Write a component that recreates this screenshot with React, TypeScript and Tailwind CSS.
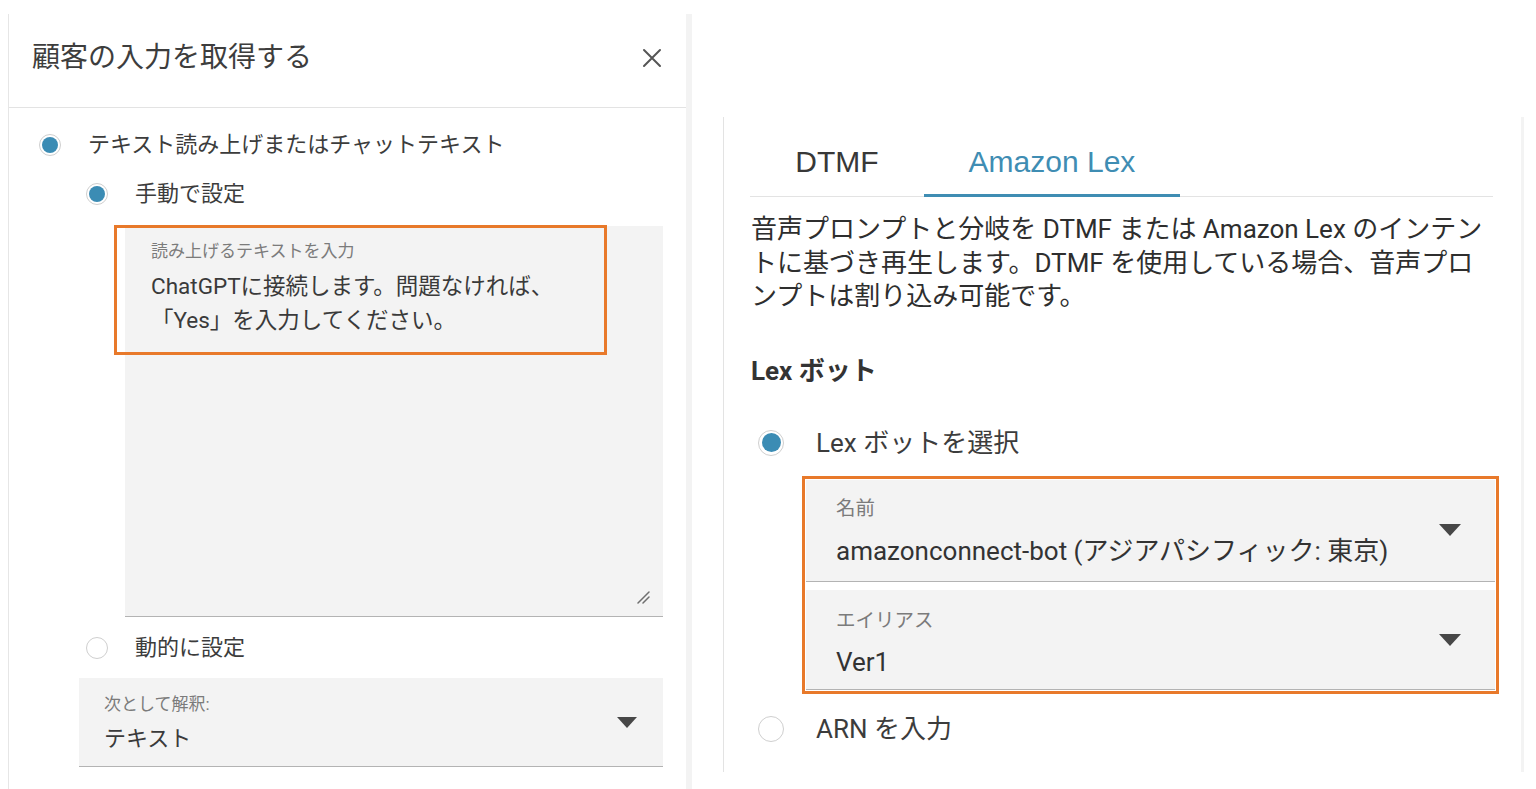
import React from "react"

// Two panels from a contact flow editor: "get customer input" block settings

function Radio({ checked, big }: { checked?: boolean; big?: boolean }) {
  return (
    <span
      className={
        big
          ? "flex h-[26px] w-[26px] shrink-0 items-center justify-center rounded-full border border-[#cfcfcf] bg-white"
          : "flex h-[22px] w-[22px] shrink-0 items-center justify-center rounded-full border border-[#cfcfcf] bg-white"
      }
    >
      {checked && <span className={big ? "h-[19px] w-[19px] rounded-full bg-[#3b8cb4]" : "h-[16px] w-[16px] rounded-full bg-[#3b8cb4]"} />}
    </span>
  )
}

function Caret({ w = 22, h = 12 }: { w?: number; h?: number }) {
  return (
    <svg width={w} height={h} viewBox={`0 0 ${w} ${h}`}>
      <path d={`M0 0H${w}L${w / 2} ${h}Z`} fill="#474747" />
    </svg>
  )
}

function CloseIcon() {
  return (
    <svg width="20" height="20" viewBox="0 0 20 20" className="shrink-0">
      <path d="M2 2L18 18M18 2L2 18" stroke="#555" strokeWidth="2" strokeLinecap="round" />
    </svg>
  )
}

function ResizeHandle() {
  return (
    <svg width="13" height="13" viewBox="0 0 13 13" className="absolute bottom-[12px] right-[13px]">
      <path d="M12 1L1 12M12 6L6 12" stroke="#6f6f6f" strokeWidth="1.5" strokeLinecap="round" />
    </svg>
  )
}

export default function App() {
  return (
    <div className="flex h-[789px] w-[1536px] items-start overflow-hidden bg-white font-['Roboto','Noto_Sans_CJK_JP',sans-serif] text-[#3c3c3c]">
      {/* left panel */}
      <div className="ml-[8px] mt-[14px] flex h-[775px] w-[684px]">
        <section className="flex w-[678px] flex-col border-l border-[#e6e6e6]">
          <header className="flex h-[94px] shrink-0 items-center justify-between border-b border-[#e3e3e3] pb-[5px] pl-[23px] pr-[24px]">
            <h1 className="text-[28px] leading-[36px] text-[#3d3d3d]">顧客の入力を取得する</h1>
            <CloseIcon />
          </header>

          <div className="flex flex-col pt-[22px]">
            <label className="flex h-[30px] items-center gap-[27px] pl-[30px] text-[22px] leading-[30px]">
              <Radio checked />
              <span>テキスト読み上げまたはチャットテキスト</span>
            </label>

            <label className="mt-[19px] flex h-[30px] items-center gap-[27px] pl-[77px] text-[22px] leading-[30px]">
              <Radio checked />
              <span>手動で設定</span>
            </label>

            <div className="relative ml-[116px] mt-[17px] h-[391px] w-[538px] border-b border-[#b3b3b3] bg-[#f3f3f3] pl-[26px] pt-[15px]">
              <div className="pointer-events-none absolute left-[-11px] top-[-1px] h-[130px] w-[493px] border-[3px] border-[#e8792a]" />
              <div className="text-[17px] leading-[20px] text-[#7b7b7b]">読み上げるテキストを入力</div>
              <div className="mt-[8px] text-[22.5px] leading-[34px] text-[#3a3a3a]">
                ChatGPTに接続します。問題なければ、
                <br />
                「Yes」を入力してください。
              </div>
              <ResizeHandle />
            </div>

            <label className="mt-[16px] flex h-[30px] items-center gap-[27px] pl-[77px] text-[22px] leading-[30px]">
              <Radio />
              <span>動的に設定</span>
            </label>

            <div className="relative ml-[70px] mt-[15px] h-[89px] w-[584px] border-b border-[#b3b3b3] bg-[#f3f3f3] pl-[25px] pt-[16px]">
              <div className="text-[17px] leading-[20px] text-[#7b7b7b]">次として解釈:</div>
              <div className="mt-[10px] text-[22px] leading-[30px] text-[#3a3a3a]">テキスト</div>
              <div className="absolute right-[26px] top-[39px]">
                <Caret w={20} h={11} />
              </div>
            </div>
          </div>
        </section>
        <div className="w-[6px] bg-[#f3f3f3]" />
      </div>

      {/* right panel */}
      <div className="ml-[31px] mt-[117px] flex h-[655px]">
        <section className="flex w-[798px] flex-col border-l border-[#e3e3e3]">
          <div className="ml-[26px] flex h-[80px] w-[743px] shrink-0 border-b border-[#e3e3e3] font-['Liberation_Sans',sans-serif] text-[30px] leading-[34px]">
            <div className="relative flex w-[174px] items-end justify-center pb-[17px] text-[#383838]">DTMF</div>
            <div className="relative flex w-[256px] items-end justify-center pb-[17px] text-[#3f8db3]">
              Amazon Lex
              <span className="absolute bottom-[-1px] left-0 right-0 h-[3px] bg-[#3f8db3]" />
            </div>
          </div>

          <p className="ml-[27px] mt-[16px] text-[26px] leading-[33.5px] text-[#2e2e2e]">
            音声プロンプトと分岐を DTMF または Amazon Lex のインテン
            <br />
            トに基づき再生します。DTMF を使用している場合、音声プロ
            <br />
            ンプトは割り込み可能です。
          </p>

          <h2 className="ml-[27px] mt-[40px] text-[26px] font-bold leading-[34px] text-[#333]">Lex ボット</h2>

          <label className="mt-[40px] flex h-[30px] items-center gap-[32px] pl-[34px] text-[26px] leading-[30px]">
            <Radio checked big />
            <span>Lex ボットを選択</span>
          </label>

          <div className="ml-[78px] mt-[18px] w-[697px] border-[3px] border-[#e8792a] p-[1px]">
            <div className="relative h-[102px] border-b border-[#b3b3b3] bg-[#f3f3f3] pl-[30px] pt-[18px]">
              <div className="text-[19.5px] leading-[22px] text-[#7b7b7b]">名前</div>
              <div className="mt-[16px] text-[26px] leading-[30px] text-[#333]">amazonconnect-bot (アジアパシフィック: 東京)</div>
              <div className="absolute right-[34px] top-[44px]">
                <Caret />
              </div>
            </div>
            <div className="relative mt-[8px] h-[100px] border-b border-[#b3b3b3] bg-[#f3f3f3] pl-[30px] pt-[20px]">
              <div className="text-[19.5px] leading-[22px] text-[#7b7b7b]">エイリアス</div>
              <div className="mt-[15px] text-[26px] leading-[30px] text-[#333]">Ver1</div>
              <div className="absolute right-[34px] top-[44px]">
                <Caret />
              </div>
            </div>
          </div>

          <label className="mt-[20px] flex h-[30px] items-center gap-[32px] pl-[34px] text-[26px] leading-[30px]">
            <Radio big />
            <span>ARN を入力</span>
          </label>
        </section>
        <div className="w-[3px] bg-[#f3f3f3]" />
      </div>
    </div>
  )
}
